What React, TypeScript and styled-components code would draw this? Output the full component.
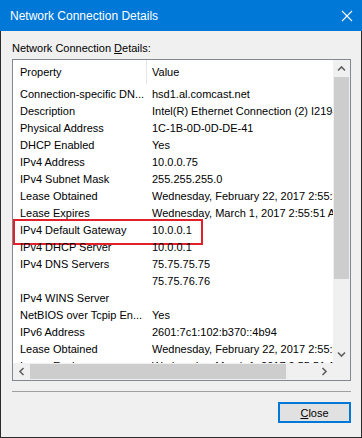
import styled, { createGlobalStyle } from "styled-components";

const GlobalStyle = createGlobalStyle`
    html, body {
        margin: 0;
        padding: 0;
        background: #f0f0f0;
    }
    * {
        box-sizing: border-box;
    }
`;

const rows: [string, string][] = [
    ["Connection-specific DN...", "hsd1.al.comcast.net"],
    ["Description", "Intel(R) Ethernet Connection (2) I219-V"],
    ["Physical Address", "1C-1B-0D-0D-DE-41"],
    ["DHCP Enabled", "Yes"],
    ["IPv4 Address", "10.0.0.75"],
    ["IPv4 Subnet Mask", "255.255.255.0"],
    ["Lease Obtained", "Wednesday, February 22, 2017 2:55:51 AM"],
    ["Lease Expires", "Wednesday, March 1, 2017 2:55:51 AM"],
    ["IPv4 Default Gateway", "10.0.0.1"],
    ["IPv4 DHCP Server", "10.0.0.1"],
    ["IPv4 DNS Servers", "75.75.75.75"],
    ["", "75.75.76.76"],
    ["IPv4 WINS Server", ""],
    ["NetBIOS over Tcpip En...", "Yes"],
    ["IPv6 Address", "2601:7c1:102:b370::4b94"],
    ["Lease Obtained", "Wednesday, February 22, 2017 2:55:51 AM"],
    ["Lease Expires", "Wednesday, March 1, 2017 2:55:51 AM"],
];

const Window = styled.div`
    width: 362px;
    height: 438px;
    display: flex;
    flex-direction: column;
    background: #f0f0f0;
    border: 1px solid #2b2b2b;
    border-top: none;
    font-family: "Liberation Sans", Arial, sans-serif;
    font-size: 11px;
    color: #000;
`;

const TitleBar = styled.div`
    height: 31px;
    margin: 0 -1px;
    background: #0078d7;
    color: #fff;
    display: flex;
    align-items: center;
    justify-content: space-between;
    padding: 0 9px 0 10px;
    font-size: 12px;
`;

const Body = styled.div`
    flex: 1;
    display: flex;
    flex-direction: column;
    padding: 10px 10px 0 11px;
`;

const Label = styled.div`
    height: 18px;
    line-height: 14px;
    u {
        text-decoration: underline;
    }
`;

const ListBox = styled.div`
    height: 322px;
    border: 1px solid #828790;
    background: #fff;
    display: grid;
    grid-template-columns: 1fr 17px;
    grid-template-rows: 1fr 17px;
`;

const Viewport = styled.div`
    overflow: hidden;
`;

const Row = styled.div<{ $highlight?: boolean }>`
    position: relative;
    display: grid;
    grid-template-columns: 134px 1fr;
    height: 17px;
    line-height: 17px;
    white-space: nowrap;

    ${({ $highlight }) =>
        $highlight &&
        `
        &::after {
            content: "";
            position: absolute;
            left: 0;
            top: -3px;
            width: 186px;
            height: 22px;
            border: 2px solid #e2202c;
        }
    `}
`;

const HeaderRow = styled(Row)`
    height: 25px;
    line-height: 25px;
    margin-bottom: 1px;
`;

const Cell = styled.div`
    padding-left: 7px;
    overflow: hidden;
`;

const ValueCell = styled.div`
    padding-left: 5px;
    overflow: hidden;
`;

const HeaderCell = styled(Cell)`
    border-right: 1px solid #e5e5e5;
    margin: 0 0 1px;
`;

const VScroll = styled.div`
    background: #f0f0f0;
    display: flex;
    flex-direction: column;
    align-items: stretch;
`;

const HScroll = styled.div`
    background: #f0f0f0;
    display: flex;
    align-items: stretch;
`;

const Arrow = styled.div`
    flex: 0 0 17px;
    display: flex;
    align-items: center;
    justify-content: center;
    color: #606060;
`;

const VThumb = styled.div`
    height: 202px;
    margin: 0 1px;
    background: #cdcdcd;
`;

const HThumb = styled.div`
    width: 256px;
    margin: 1px 0;
    background: #cdcdcd;
`;

const Spacer = styled.div`
    flex: 1;
`;

const Corner = styled.div`
    background: #f0f0f0;
`;

const Separator = styled.div`
    height: 1px;
    margin: 10px 0 0;
    background: #a0a0a0;
`;

const Footer = styled.div`
    display: flex;
    justify-content: flex-end;
    padding-top: 10px;
`;

const Button = styled.button`
    width: 73px;
    height: 21px;
    border: 2px solid #0078d7;
    background: #e1e1e1;
    font-family: "Liberation Sans", Arial, sans-serif;
    font-size: 11px;
    color: #000;
    padding: 0;
`;

const Chevron = ({ dir }: { dir: "up" | "down" | "left" | "right" }) => {
    const rot = { up: 0, right: 90, down: 180, left: 270 }[dir];
    return (
        <svg width="9" height="9" viewBox="0 0 9 9" style={{ transform: `rotate(${rot}deg)` }}>
            <path d="M1 6.5 L4.5 3 L8 6.5" fill="none" stroke="#606060" strokeWidth="1.6" />
        </svg>
    );
};

export default function App() {
    return (
        <>
            <GlobalStyle />
            <Window>
                <TitleBar>
                    <span>Network Connection Details</span>
                    <svg width="12" height="12" viewBox="0 0 12 12">
                        <path d="M1 1 L11 11 M11 1 L1 11" stroke="#fff" strokeWidth="1.1" />
                    </svg>
                </TitleBar>
                <Body>
                    <Label>
                        Network Connection <u>D</u>etails:
                    </Label>
                    <ListBox>
                        <Viewport>
                            <HeaderRow>
                                <HeaderCell>Property</HeaderCell>
                                <ValueCell>Value</ValueCell>
                            </HeaderRow>
                            {rows.map(([k, v], i) => (
                                <Row key={i} $highlight={k === "IPv4 Default Gateway"}>
                                    <Cell>{k}</Cell>
                                    <ValueCell>{v}</ValueCell>
                                </Row>
                            ))}
                        </Viewport>
                        <VScroll>
                            <Arrow>
                                <Chevron dir="up" />
                            </Arrow>
                            <VThumb />
                            <Spacer />
                            <Arrow>
                                <Chevron dir="down" />
                            </Arrow>
                        </VScroll>
                        <HScroll>
                            <Arrow>
                                <Chevron dir="left" />
                            </Arrow>
                            <HThumb />
                            <Spacer />
                            <Arrow>
                                <Chevron dir="right" />
                            </Arrow>
                        </HScroll>
                        <Corner />
                    </ListBox>
                    <Separator />
                    <Footer>
                        <Button>
                            <u>C</u>lose
                        </Button>
                    </Footer>
                </Body>
            </Window>
        </>
    );
}
